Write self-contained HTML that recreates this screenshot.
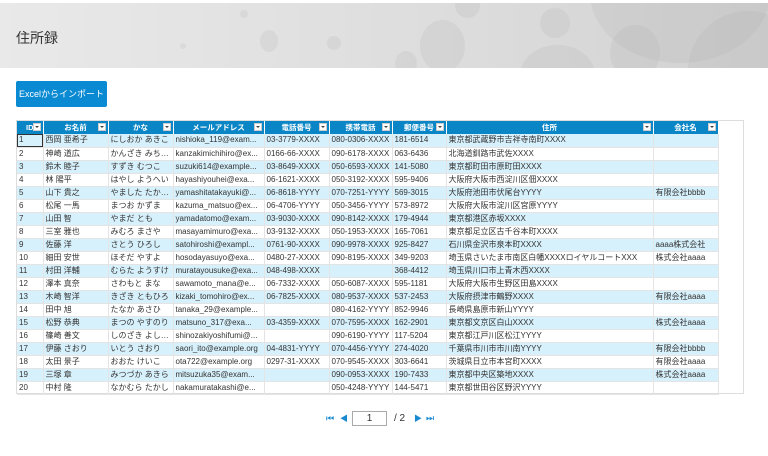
<!DOCTYPE html>
<html><head><meta charset="utf-8"><style>
*{margin:0;padding:0;box-sizing:border-box}
body{width:768px;height:456px;background:#fff;font-family:"Liberation Sans","Noto Sans CJK JP",sans-serif;position:relative;overflow:hidden}
.hdr{position:absolute;left:0;top:3px;width:768px;height:65px;background:linear-gradient(90deg,#e9e9e9,#dadada 70%,#d0d0d0);overflow:hidden}
.hdr .c{position:absolute;border-radius:50%;background:rgba(170,170,170,.18)}
.hdr h1{position:absolute;left:16px;top:25px;font-size:14px;font-weight:normal;color:#333}
.btn{position:absolute;left:16px;top:81px;width:91px;height:26px;background:#0a8ad2;border-radius:2px;color:#fff;font-size:9px;line-height:26px;text-align:center;white-space:nowrap}
.grid{position:absolute;left:16px;top:120px;width:728px;height:274px;border:1px solid #ddd}
table{border-collapse:collapse;table-layout:fixed;width:701px;font-size:8px;color:#333}
th{background:#0a86c6;color:#fff;height:13px;font-weight:bold;text-align:center;position:relative;border-right:1px solid #fff;font-size:7.5px;line-height:12px;padding:0;white-space:nowrap;overflow:hidden}
th i{position:absolute;right:2px;top:2px;width:8px;height:8px;background:#fff;border:1px solid #ccc}
th i:after{content:"";position:absolute;left:1px;top:2px;border:2px solid transparent;border-top:2px solid #444}
td{height:13px;padding:0 2px;white-space:nowrap;overflow:hidden;text-overflow:ellipsis;border-right:1px solid #e4e4e4;border-bottom:1px solid #e4e4e4;line-height:12px}
tr:nth-child(even) td{background:#d7f1fc}
.pg{position:absolute;top:410px;left:326px;font-size:10px;color:#333;white-space:nowrap}
.pg span{position:absolute;color:#1a8ad0;white-space:nowrap}
.pg .box{position:absolute;left:26px;top:1px;width:35px;height:15px;border:1px solid #aaa;text-align:center;line-height:13px;color:#333}
</style></head><body>
<div class="hdr">
<div class="c" style="left:455px;top:-10px;width:25px;height:25px"></div>
<div class="c" style="left:260px;top:27px;width:18px;height:22px"></div>
<div class="c" style="left:240px;top:7px;width:8px;height:8px"></div>
<div class="c" style="left:327px;top:33px;width:14px;height:14px"></div>
<div class="c" style="left:420px;top:17px;width:45px;height:52px"></div>
<div class="c" style="left:395px;top:48px;width:22px;height:25px"></div>
<div class="c" style="left:540px;top:5px;width:30px;height:30px"></div>
<div class="c" style="left:520px;top:42px;width:75px;height:60px"></div>
<div class="c" style="left:610px;top:22px;width:50px;height:55px"></div>
<div class="c" style="left:590px;top:-80px;width:180px;height:140px"></div>
<div class="c" style="left:688px;top:8px;width:120px;height:120px"></div>
<div class="c" style="left:180px;top:40px;width:6px;height:6px"></div>
<h1>住所録</h1></div>
<div class="btn">Excelからインポート</div>
<div class="grid"><table>
<colgroup><col style="width:26px"><col style="width:65px"><col style="width:65px"><col style="width:91px"><col style="width:65px"><col style="width:63px"><col style="width:54px"><col style="width:207px"><col style="width:65px"></colgroup>
<tr><th>ID<i></i></th><th>お名前<i></i></th><th>かな<i></i></th><th>メールアドレス<i></i></th><th>電話番号<i></i></th><th>携帯電話<i></i></th><th>郵便番号<i></i></th><th>住所<i></i></th><th>会社名<i></i></th></tr>
<tr><td style="outline:1px solid #333;outline-offset:-1px">1</td><td>西岡 亜希子</td><td>にしおか あきこ</td><td>nishioka_119@exam...</td><td>03-3779-XXXX</td><td>080-0306-XXXX</td><td>181-6514</td><td>東京都武蔵野市吉祥寺南町XXXX</td><td></td></tr>
<tr><td>2</td><td>神崎 道広</td><td>かんざき みちひろ</td><td>kanzakimichihiro@ex...</td><td>0166-66-XXXX</td><td>090-6178-XXXX</td><td>063-6436</td><td>北海道釧路市武佐XXXX</td><td></td></tr>
<tr><td>3</td><td>鈴木 睦子</td><td>すずき むつこ</td><td>suzuki614@example...</td><td>03-8649-XXXX</td><td>050-6593-XXXX</td><td>141-5080</td><td>東京都町田市原町田XXXX</td><td></td></tr>
<tr><td>4</td><td>林 陽平</td><td>はやし ようへい</td><td>hayashiyouhei@exa...</td><td>06-1621-XXXX</td><td>050-3192-XXXX</td><td>595-9406</td><td>大阪府大阪市西淀川区佃XXXX</td><td></td></tr>
<tr><td>5</td><td>山下 貴之</td><td>やました たかゆき</td><td>yamashitatakayuki@...</td><td>06-8618-YYYY</td><td>070-7251-YYYY</td><td>569-3015</td><td>大阪府池田市伏尾台YYYY</td><td>有限会社bbbb</td></tr>
<tr><td>6</td><td>松尾 一馬</td><td>まつお かずま</td><td>kazuma_matsuo@ex...</td><td>06-4706-YYYY</td><td>050-3456-YYYY</td><td>573-8972</td><td>大阪府大阪市淀川区宮原YYYY</td><td></td></tr>
<tr><td>7</td><td>山田 智</td><td>やまだ とも</td><td>yamadatomo@exam...</td><td>03-9030-XXXX</td><td>090-8142-XXXX</td><td>179-4944</td><td>東京都港区赤坂XXXX</td><td></td></tr>
<tr><td>8</td><td>三室 雅也</td><td>みむろ まさや</td><td>masayamimuro@exa...</td><td>03-9132-XXXX</td><td>050-1953-XXXX</td><td>165-7061</td><td>東京都足立区古千谷本町XXXX</td><td></td></tr>
<tr><td>9</td><td>佐藤 洋</td><td>さとう ひろし</td><td>satohiroshi@exampl...</td><td>0761-90-XXXX</td><td>090-9978-XXXX</td><td>925-8427</td><td>石川県金沢市泉本町XXXX</td><td>aaaa株式会社</td></tr>
<tr><td>10</td><td>細田 安世</td><td>ほそだ やすよ</td><td>hosodayasuyo@exa...</td><td>0480-27-XXXX</td><td>090-8195-XXXX</td><td>349-9203</td><td>埼玉県さいたま市南区白幡XXXXロイヤルコートXXX</td><td>株式会社aaaa</td></tr>
<tr><td>11</td><td>村田 洋輔</td><td>むらた ようすけ</td><td>muratayousuke@exa...</td><td>048-498-XXXX</td><td></td><td>368-4412</td><td>埼玉県川口市上青木西XXXX</td><td></td></tr>
<tr><td>12</td><td>澤本 真奈</td><td>さわもと まな</td><td>sawamoto_mana@e...</td><td>06-7332-XXXX</td><td>050-6087-XXXX</td><td>595-1181</td><td>大阪府大阪市生野区田島XXXX</td><td></td></tr>
<tr><td>13</td><td>木崎 智洋</td><td>きざき ともひろ</td><td>kizaki_tomohiro@ex...</td><td>06-7825-XXXX</td><td>080-9537-XXXX</td><td>537-2453</td><td>大阪府摂津市鶴野XXXX</td><td>有限会社aaaa</td></tr>
<tr><td>14</td><td>田中 旭</td><td>たなか あさひ</td><td>tanaka_29@example...</td><td></td><td>080-4162-YYYY</td><td>852-9946</td><td>長崎県島原市新山YYYY</td><td></td></tr>
<tr><td>15</td><td>松野 恭典</td><td>まつの やすのり</td><td>matsuno_317@exa...</td><td>03-4359-XXXX</td><td>070-7595-XXXX</td><td>162-2901</td><td>東京都文京区白山XXXX</td><td>株式会社aaaa</td></tr>
<tr><td>16</td><td>篠崎 善文</td><td>しのざき よしふみ</td><td>shinozakiyoshifumi@...</td><td></td><td>090-6190-YYYY</td><td>117-5204</td><td>東京都江戸川区松江YYYY</td><td></td></tr>
<tr><td>17</td><td>伊藤 さおり</td><td>いとう さおり</td><td>saori_ito@example.org</td><td>04-4831-YYYY</td><td>070-4456-YYYY</td><td>274-4020</td><td>千葉県市川市市川南YYYY</td><td>有限会社bbbb</td></tr>
<tr><td>18</td><td>太田 景子</td><td>おおた けいこ</td><td>ota722@example.org</td><td>0297-31-XXXX</td><td>070-9545-XXXX</td><td>303-6641</td><td>茨城県日立市本宮町XXXX</td><td>有限会社aaaa</td></tr>
<tr><td>19</td><td>三塚 章</td><td>みつづか あきら</td><td>mitsuzuka35@exam...</td><td></td><td>090-0953-XXXX</td><td>190-7433</td><td>東京都中央区築地XXXX</td><td>株式会社aaaa</td></tr>
<tr><td>20</td><td>中村 隆</td><td>なかむら たかし</td><td>nakamuratakashi@e...</td><td></td><td>050-4248-YYYY</td><td>144-5471</td><td>東京都世田谷区野沢YYYY</td><td></td></tr>
</table></div>
<div class="pg">
<span style="left:0;top:3px;font-size:9px">⏮</span><span style="left:14px;top:3px;font-size:8px">◀</span>
<div class="box">1</div>
<span style="left:68px;top:3px;color:#333">/ 2</span>
<span style="left:88px;top:3px;font-size:8px">▶</span><span style="left:100px;top:3px;font-size:9px">⏭</span>
</div>
</body></html>
